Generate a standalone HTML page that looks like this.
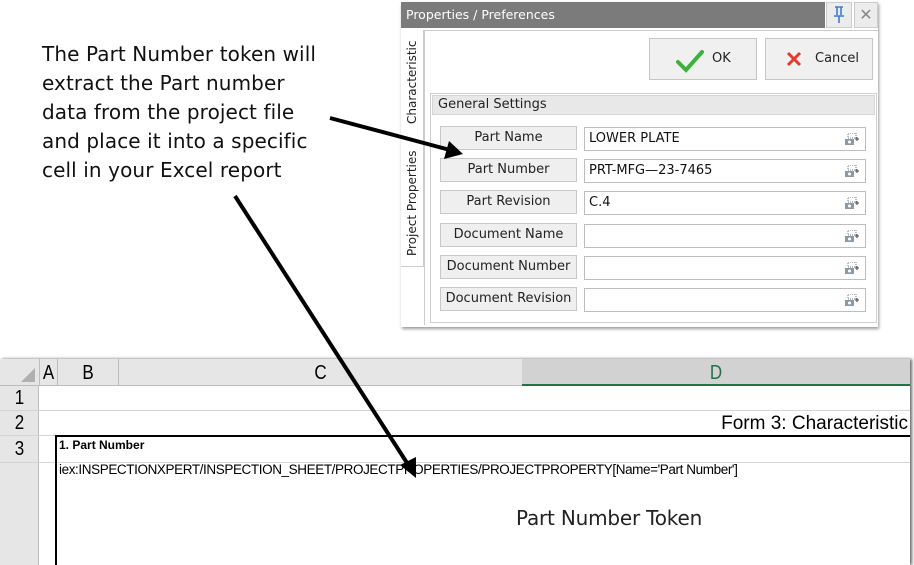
<!DOCTYPE html>
<html><head><style>
*{margin:0;padding:0;box-sizing:border-box}
html,body{width:914px;height:565px;overflow:hidden}
body{background:#fff;position:relative;font-family:"DejaVu Sans","Liberation Sans",sans-serif}
.a{position:absolute}
.lbl{position:absolute;left:440px;width:137px;height:24px;background:#efefef;border:1px solid #c8c8c8;font-size:13px;color:#222;text-align:center;line-height:22px;white-space:nowrap}
.inp{position:absolute;left:584px;width:282px;height:24px;background:#fff;border:1px solid #bdbdbd;font-size:13px;color:#111;padding-left:4px;line-height:22px}
.cam{position:absolute;right:6px;top:5px;width:14px;height:12px}
.xl{font-family:"Liberation Sans",Arial,sans-serif}
</style></head><body>
<div class="a" style="left:42px;top:40px;font-size:20px;line-height:29px;color:#111;letter-spacing:0.1px">The Part Number token will<br>extract the Part number<br>data from the project file<br>and place it into a specific<br>cell in your Excel report</div>

<div class="a" style="left:401px;top:2px;width:477px;height:325px;background:#fff;box-shadow:1px 2px 3px rgba(0,0,0,.4)"></div>
<div class="a" style="left:401px;top:2px;width:424px;height:26px;background:#7b7b7b;color:#fff;font-size:12.5px;line-height:26px;padding-left:5px">Properties / Preferences</div>
<div class="a" style="left:826px;top:2px;width:26px;height:26px;background:#ececec;border:1px solid #ccc"></div>
<svg class="a" style="left:832px;top:6px" width="14" height="18"><path d="M3 1H11M5 1V9M9 1V9M2 10H12M7 10V17" stroke="#3a7fd0" stroke-width="1.6" fill="none"/></svg>
<div class="a" style="left:854px;top:2px;width:24px;height:26px;background:#ececec;border:1px solid #ccc;color:#888;text-align:center;font-size:16px;line-height:24px;font-weight:bold">✕</div>
<div class="a" style="left:401px;top:30px;width:23px;height:237px;border-right:1px solid #ccc;border-bottom:1px solid #ccc"></div>
<div class="a" style="left:424px;top:30px;width:454px;height:1px;background:#ccc"></div>
<div class="a" style="left:424px;top:31px;width:1px;height:294px;background:#ccc"></div>
<div class="a" style="left:405px;top:124px;transform-origin:0 0;transform:rotate(-90deg);font-size:12px;white-space:nowrap;color:#222">Characteristic</div>
<div class="a" style="left:405px;top:256px;transform-origin:0 0;transform:rotate(-90deg);font-size:12px;white-space:nowrap;color:#222">Project Properties</div>

<div class="a" style="left:649px;top:38px;width:108px;height:42px;background:#f0f0f0;border:1px solid #c6c6c6;font-size:13px;line-height:40px;padding-left:62px;color:#222">OK</div>
<svg class="a" style="left:676px;top:49px" width="28" height="24"><path d="M2 13 L10 21 L26 3" stroke="#3bb33b" stroke-width="4" fill="none" stroke-linecap="round"/></svg>
<div class="a" style="left:765px;top:38px;width:108px;height:42px;background:#f0f0f0;border:1px solid #c6c6c6;font-size:13px;line-height:40px;padding-left:49px;color:#222">Cancel</div>
<svg class="a" style="left:786px;top:51px" width="16" height="16"><path d="M2 2L14 14M14 2L2 14" stroke="#e23a2c" stroke-width="3"/></svg>

<div class="a" style="left:430px;top:93px;width:447px;height:230px;border:1px solid #cfcfcf"></div>
<div class="a" style="left:432px;top:95px;width:443px;height:20px;background:#e8e8e8;border:1px solid #d5d5d5;font-size:13px;line-height:18px;padding-left:5px;color:#222">General Settings</div>

<div class="lbl" style="top:126px">Part Name</div>
<div class="lbl" style="top:158px">Part Number</div>
<div class="lbl" style="top:190px">Part Revision</div>
<div class="lbl" style="top:223px">Document Name</div>
<div class="lbl" style="top:255px">Document Number</div>
<div class="lbl" style="top:287px">Document Revision</div>
<div class="inp" style="top:127px">LOWER PLATE<svg class="cam"><rect x="3" y="0" width="8" height="5" fill="none" stroke="#777" stroke-dasharray="1 1"/><rect x="0" y="6" width="9" height="6" fill="#8a9aa8"/><circle cx="4.5" cy="9" r="1.5" fill="#fff"/><path d="M10 6h4M12 4v4" stroke="#444"/></svg></div>
<div class="inp" style="top:159px">PRT-MFG—23-7465<svg class="cam"><rect x="3" y="0" width="8" height="5" fill="none" stroke="#777" stroke-dasharray="1 1"/><rect x="0" y="6" width="9" height="6" fill="#8a9aa8"/><circle cx="4.5" cy="9" r="1.5" fill="#fff"/><path d="M10 6h4M12 4v4" stroke="#444"/></svg></div>
<div class="inp" style="top:191px">C.4<svg class="cam"><rect x="3" y="0" width="8" height="5" fill="none" stroke="#777" stroke-dasharray="1 1"/><rect x="0" y="6" width="9" height="6" fill="#8a9aa8"/><circle cx="4.5" cy="9" r="1.5" fill="#fff"/><path d="M10 6h4M12 4v4" stroke="#444"/></svg></div>
<div class="inp" style="top:224px"><svg class="cam"><rect x="3" y="0" width="8" height="5" fill="none" stroke="#777" stroke-dasharray="1 1"/><rect x="0" y="6" width="9" height="6" fill="#8a9aa8"/><circle cx="4.5" cy="9" r="1.5" fill="#fff"/><path d="M10 6h4M12 4v4" stroke="#444"/></svg></div>
<div class="inp" style="top:256px"><svg class="cam"><rect x="3" y="0" width="8" height="5" fill="none" stroke="#777" stroke-dasharray="1 1"/><rect x="0" y="6" width="9" height="6" fill="#8a9aa8"/><circle cx="4.5" cy="9" r="1.5" fill="#fff"/><path d="M10 6h4M12 4v4" stroke="#444"/></svg></div>
<div class="inp" style="top:288px"><svg class="cam"><rect x="3" y="0" width="8" height="5" fill="none" stroke="#777" stroke-dasharray="1 1"/><rect x="0" y="6" width="9" height="6" fill="#8a9aa8"/><circle cx="4.5" cy="9" r="1.5" fill="#fff"/><path d="M10 6h4M12 4v4" stroke="#444"/></svg></div>

<div class="a xl" style="left:0;top:359px;width:910px;height:206px;background:#fff;box-shadow:2px 0 3px rgba(0,0,0,.6);overflow:hidden">
  <div class="a" style="left:0;top:0;width:910px;height:27px;background:#e6e6e6;border-bottom:1px solid #bdbdbd"></div>
  <div class="a" style="left:522px;top:0;width:388px;height:27px;background:#d2d2d2;border-bottom:2px solid #217346"></div>
  <div class="a" style="left:0;top:27px;width:39px;height:179px;background:#e6e6e6;border-right:1px solid #bdbdbd"></div>
  <svg class="a" style="left:20px;top:8px" width="16" height="16"><path d="M15 1V15H1Z" fill="#b0b0b0"/></svg>
  <div class="a" style="left:39px;top:0;width:1px;height:27px;background:#bdbdbd"></div>
  <div class="a" style="left:57px;top:0;width:1px;height:27px;background:#bdbdbd"></div>
  <div class="a" style="left:118px;top:0;width:1px;height:27px;background:#bdbdbd"></div>
  <div class="a" style="left:40px;top:3px;width:17px;text-align:center;font-size:20px;transform:scaleX(.85)">A</div>
  <div class="a" style="left:58px;top:3px;width:60px;text-align:center;font-size:20px;transform:scaleX(.85)">B</div>
  <div class="a" style="left:119px;top:3px;width:403px;text-align:center;font-size:20px;transform:scaleX(.85)">C</div>
  <div class="a" style="left:522px;top:3px;width:388px;text-align:center;font-size:20px;color:#217346;transform:scaleX(.85)">D</div>
  <div class="a" style="left:0;top:51px;width:910px;height:1px;background:#d4d4d4"></div>
  <div class="a" style="left:0;top:76px;width:910px;height:1px;background:#d4d4d4"></div>
  <div class="a" style="left:0;top:103px;width:910px;height:1px;background:#d4d4d4"></div>
  <div class="a" style="left:0;top:28px;width:39px;text-align:center;font-size:20px;transform:scaleX(.85)">1</div>
  <div class="a" style="left:0;top:53px;width:39px;text-align:center;font-size:20px;transform:scaleX(.85)">2</div>
  <div class="a" style="left:0;top:79px;width:39px;text-align:center;font-size:20px;transform:scaleX(.85)">3</div>
  <div class="a" style="right:2px;top:54px;font-size:19px">Form 3: Characteristic</div>
  <div class="a" style="left:55px;top:76px;width:855px;height:130px;border:2px solid #000;border-bottom:none;border-right:none"></div>
  <div class="a" style="left:59px;top:79px;font-size:12px;font-weight:bold">1. Part Number</div>
  <div class="a" style="left:59px;top:103px;font-size:13.5px;letter-spacing:-0.4px;white-space:nowrap">iex:INSPECTIONXPERT/INSPECTION_SHEET/PROJECTPROPERTIES/PROJECTPROPERTY[Name='Part Number']</div>
  <div class="a" style="left:516px;top:147px;font-size:20px;font-family:'DejaVu Sans',sans-serif;color:#222;letter-spacing:-0.2px">Part Number Token</div>
</div>

<svg class="a" style="left:0;top:0" width="914" height="565">
<path d="M330 118 L450 150" stroke="#000" stroke-width="4"/>
<path d="M463 154 L444 159 L449 141Z" fill="#000"/>
<path d="M235 196 L409 466" stroke="#000" stroke-width="4"/>
<path d="M416 478 L400 465 L416 457Z" fill="#000"/>
</svg>
</body></html>
